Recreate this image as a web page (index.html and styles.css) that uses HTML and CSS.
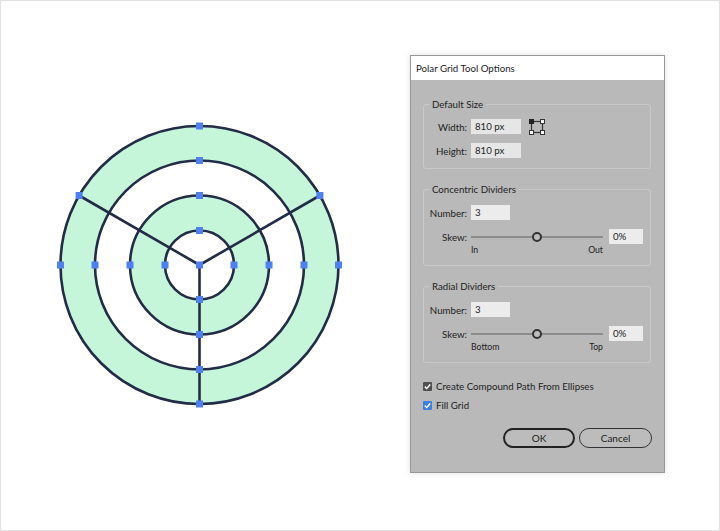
FILE: index.html
```html
<!DOCTYPE html>
<html lang="en">
<head>
	<meta charset="UTF-8"/>
	<title>Polar Grid Tool Options</title>
	<link rel="stylesheet" href="styles.css">
</head>
<body>
	<div class="page">

		<svg class="grid" width="409" height="529" viewBox="1 1 409 529">
			<g stroke="#222c47" stroke-width="2.6">
				<circle cx="199.5" cy="265" r="139" fill="#c6f6da"/>
				<circle cx="199.5" cy="265" r="104.5" fill="#fff"/>
				<circle cx="199.5" cy="265" r="69.5" fill="#c6f6da"/>
				<circle cx="199.5" cy="265" r="34.5" fill="#fff"/>
				<line x1="199.5" y1="265" x2="199.5" y2="404"/>
				<line x1="199.5" y1="265" x2="79.1" y2="195.5"/>
				<line x1="199.5" y1="265" x2="319.9" y2="195.5"/>
			</g>
			<g fill="#4f80f2" id="points"></g>
		</svg>

		<div class="dialog">
			<div class="title">Polar Grid Tool Options</div>
			<div class="body">

				<fieldset class="size">
					<legend>Default Size</legend>
					<div class="row">
						<label>Width:</label>
						<span class="field wide">810 px</span>
						<svg class="ref" width="16" height="16" viewBox="0 0 16 16">
							<rect x="2.5" y="2.5" width="11" height="11" fill="none" stroke="#333" stroke-width="1.2"/>
							<rect x="0.5" y="0.5" width="4" height="4" fill="#222" stroke="#222"/>
							<rect x="11.5" y="0.5" width="4" height="4" fill="#fff" stroke="#333"/>
							<rect x="0.5" y="11.5" width="4" height="4" fill="#fff" stroke="#333"/>
							<rect x="11.5" y="11.5" width="4" height="4" fill="#fff" stroke="#333"/>
						</svg>
					</div>
					<div class="row">
						<label>Height:</label>
						<span class="field wide">810 px</span>
					</div>
				</fieldset>

				<fieldset>
					<legend>Concentric Dividers</legend>
					<div class="row">
						<label>Number:</label>
						<span class="field num">3</span>
					</div>
					<div class="row">
						<label>Skew:</label>
						<div class="slider"><span class="thumb"></span></div>
						<span class="field pct">0%</span>
					</div>
					<div class="ends">
						<span>In</span>
						<span>Out</span>
					</div>
				</fieldset>

				<fieldset>
					<legend>Radial Dividers</legend>
					<div class="row">
						<label>Number:</label>
						<span class="field num">3</span>
					</div>
					<div class="row">
						<label>Skew:</label>
						<div class="slider"><span class="thumb"></span></div>
						<span class="field pct">0%</span>
					</div>
					<div class="ends">
						<span>Bottom</span>
						<span>Top</span>
					</div>
				</fieldset>

				<div class="check first">
					<span class="box gray">
						<svg width="9" height="9" viewBox="0 0 9 9"><path d="M1.8 4.6 L3.7 6.5 L7.3 2.4" fill="none" stroke="#fff" stroke-width="1.5"/></svg>
					</span>
					Create Compound Path From Ellipses
				</div>
				<div class="check">
					<span class="box blue">
						<svg width="9" height="9" viewBox="0 0 9 9"><path d="M1.8 4.6 L3.7 6.5 L7.3 2.4" fill="none" stroke="#fff" stroke-width="1.5"/></svg>
					</span>
					Fill Grid
				</div>

				<div class="buttons">
					<button class="ok">OK</button>
					<button>Cancel</button>
				</div>

			</div>
		</div>

	</div>

	<script>
		// anchor points of the polar grid
		var cx = 199.5, cy = 265
		var radii = [139, 104.5, 69.5, 34.5]
		var pts = [[cx, cy], [79.1, 195.5], [319.9, 195.5]]
		for(var i = 0; i < radii.length; i++){
			var r = radii[i]
			pts.push([cx, cy - r], [cx - r, cy], [cx + r, cy], [cx, cy + r])
		}
		var g = document.querySelector("#points")
		var html = ''
		for(var i = 0; i < pts.length; i++){
			html += '<rect x="' + (pts[i][0] - 3.5) + '" y="' + (pts[i][1] - 3.5) + '" width="7" height="7"/>'
		}
		g.innerHTML = html
	</script>
</body>
</html>
```

FILE: styles.css
```css
*{
	box-sizing: border-box;
}
body{
	margin: 0;
	background: #fff;
	font-family: Lato, "Liberation Sans", sans-serif;
	font-size: 9.7px;
	color: #222;
}
.page{
	width: 720px;
	height: 531px;
	border: 1px solid #e2e2e2;
	display: flex;
	align-items: flex-start;
}
.grid{
	display: block;
	flex: none;
}
.dialog{
	width: 255px;
	height: 418px;
	margin-top: 54px;
	border: 1px solid #979797;
	background: #b9b9b9;
	box-shadow: 0 0 6px rgba(0,0,0,.12);
}
.title{
	height: 24px;
	line-height: 24px;
	padding-left: 5px;
	background: #fff;
}
.body{
	padding: 17px 13px 0 12px;
}
fieldset{
	margin: 13px 0 0;
	padding: 9px 0 10px;
	border: 1px solid #c9c9c9;
	border-radius: 3px;
	min-width: 0;
}
fieldset.size{
	margin-top: 0;
	padding-top: 8px;
}
legend{
	margin-left: 5px;
	padding: 0 3px;
	line-height: 14px;
}
.row{
	display: flex;
	align-items: center;
	height: 15px;
}
.row + .row{
	margin-top: 9px;
}
label{
	width: 43px;
	margin-right: 4px;
	text-align: right;
}
.field{
	height: 15px;
	line-height: 15px;
	padding-left: 4px;
	background: #ececec;
}
.wide{
	width: 50px;
	background: #e6e6e6;
}
.num{
	width: 39px;
}
.pct{
	width: 34px;
	margin-left: 6px;
}
.ref{
	margin-left: 8px;
}
.slider{
	position: relative;
	width: 132px;
	height: 2px;
	background: #8c8c8c;
}
.thumb{
	position: absolute;
	left: 61px;
	top: -4px;
	width: 10px;
	height: 10px;
	border: 2px solid #333;
	border-radius: 50%;
	background: #bdbdbd;
}
.ends{
	display: flex;
	justify-content: space-between;
	width: 132px;
	margin-left: 47px;
	height: 11px;
	line-height: 11px;
	font-size: 8.7px;
}
.check{
	display: flex;
	align-items: center;
	height: 14px;
	margin-top: 5px;
}
.check.first{
	margin-top: 16px;
}
.box{
	display: flex;
	width: 9px;
	height: 9px;
	margin-right: 4px;
	border-radius: 1px;
}
.box.gray{
	background: #505050;
}
.box.blue{
	background: #3d7fe0;
}
.buttons{
	display: flex;
	justify-content: flex-end;
	gap: 4px;
	margin-top: 16px;
	margin-right: -1px;
}
button{
	width: 73px;
	height: 20px;
	border: 1px solid #333;
	border-radius: 10px;
	background: #bcbcbc;
	font-family: Lato, "Liberation Sans", sans-serif;
	font-size: 10px;
	color: #222;
	padding: 0;
}
button.ok{
	width: 72px;
	border: 2px solid #222;
}
```
